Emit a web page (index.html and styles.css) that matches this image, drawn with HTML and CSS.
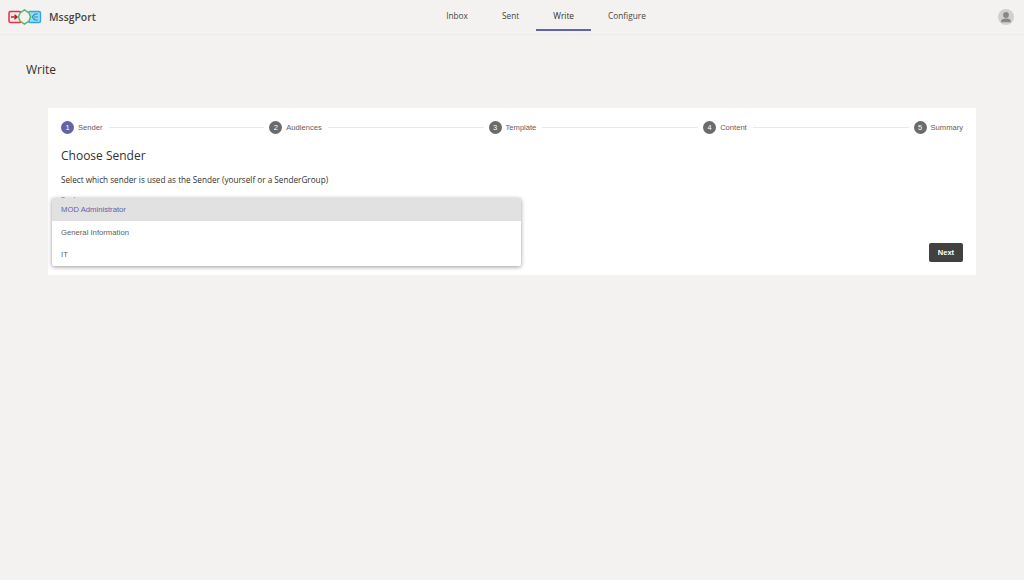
FILE: index.html
```html
<!DOCTYPE html>
<html lang="en">
<head>
  <meta charset="UTF-8">
  <meta name="viewport" content="width=device-width, initial-scale=1.0">
  <title>MssgPort</title>
  <link rel="stylesheet" href="styles.css">
</head>
<body>

  <header class="topBar">
    <div class="brand">
      <svg class="logo" width="34" height="16" viewBox="0 0 34 16">
        <rect x="1" y="2.5" width="12" height="11" rx="1.5" fill="#f9e4e6" stroke="#dc3545" stroke-width="1.5"/>
        <path d="M3 8h6M6.5 5.8L9 8 6.5 10.2" fill="none" stroke="#b3202f" stroke-width="1.5"/>
        <rect x="20.5" y="2.5" width="12" height="11" rx="1.5" fill="#9bdcf5" stroke="#2ea8e0" stroke-width="1.4"/>
        <path d="M24 8l3-3M24 8l3 3M27 5h3M27 11h3M26 8h4" fill="none" stroke="#1f8fc6" stroke-width="1.1"/>
        <path d="M16.5 .8L21 4 22.5 8 21 12 16.5 15.2 12 12 10.5 8 12 4Z" fill="#f3f2f1" stroke="#5cb85c" stroke-width="1.5" stroke-linejoin="round"/>
      </svg>
      <span class="brandName">MssgPort</span>
    </div>
    <nav class="mainNav">
      <a class="navItem">Inbox</a>
      <a class="navItem">Sent</a>
      <a class="navItem active">Write</a>
      <a class="navItem">Configure</a>
    </nav>
    <div class="avatar">
      <svg width="16" height="16" viewBox="0 0 16 16">
        <circle cx="8" cy="8" r="8" fill="#d2d0ce"/>
        <circle cx="8" cy="6" r="2.9" fill="#8a8886"/>
        <path d="M3 13.2c0-2.6 1.6-3.7 5-3.7s5 1.1 5 3.7z" fill="#8a8886"/>
      </svg>
    </div>
  </header>

  <h1 class="pageTitle">Write</h1>

  <main class="card">
    <div class="stepper">
      <div class="step current"><span class="stepNo">1</span><span class="stepName">Sender</span></div>
      <div class="stepLine"></div>
      <div class="step"><span class="stepNo">2</span><span class="stepName">Audiences</span></div>
      <div class="stepLine"></div>
      <div class="step"><span class="stepNo">3</span><span class="stepName">Template</span></div>
      <div class="stepLine"></div>
      <div class="step"><span class="stepNo">4</span><span class="stepName">Content</span></div>
      <div class="stepLine"></div>
      <div class="step"><span class="stepNo">5</span><span class="stepName">Summary</span></div>
    </div>

    <h2 class="cardTitle">Choose Sender</h2>
    <p class="cardText">Select which sender is used as the Sender (yourself or a SenderGroup)</p>

    <div class="field">
      <label class="fieldLabel">Sender</label>
      <ul class="menu">
        <li class="menuItem selected">MOD Administrator</li>
        <li class="menuItem">General Information</li>
        <li class="menuItem">IT</li>
      </ul>
    </div>

    <div class="actions">
      <button class="nextBtn">Next</button>
    </div>
  </main>

</body>
</html>
```

FILE: styles.css
```css
* {
  box-sizing: border-box;
}
html, body {
  margin: 0;
  padding: 0;
}
body {
  min-height: 580px;
  background: #f3f2f1;
  font-family: "Open Sans", "Liberation Sans", sans-serif;
  color: #323130;
}
.topBar {
  height: 35px;
  border-bottom: 1px solid #edebe9;
  display: flex;
  align-items: stretch;
  justify-content: space-between;
  padding: 0 10px 0 8px;
}
.brand {
  width: 300px;
  display: flex;
  align-items: center;
  padding-bottom: 1px;
}
.logo {
  display: block;
}
.brandName {
  margin-left: 7px;
  font-size: 10.4px;
  font-weight: 600;
  color: #484644;
}
.mainNav {
  display: flex;
  height: 31px;
  margin-right: 214px;
}
.navItem {
  display: block;
  padding: 0 17px;
  font-size: 8.3px;
  line-height: 32px;
  color: #484644;
}
.navItem.active {
  border-bottom: 2px solid #6264a7;
  color: #323130;
}
.avatar {
  display: flex;
  align-items: center;
  padding-bottom: 1px;
}
.avatar svg {
  display: block;
}
.pageTitle {
  margin: 26px 0 0 26px;
  font-size: 12px;
  line-height: 18px;
  font-weight: 400;
  color: #323130;
}
.card {
  margin: 29px 48px 0;
  height: 167px;
  background: #fff;
  padding: 13px;
}
.stepper {
  display: flex;
  align-items: center;
  height: 13px;
}
.step {
  display: flex;
  align-items: center;
}
.stepNo {
  width: 13px;
  height: 13px;
  border-radius: 50%;
  background: #6b6b6b;
  color: #fff;
  font-family: "Liberation Sans", sans-serif;
  font-size: 7.5px;
  line-height: 13px;
  text-align: center;
}
.step.current .stepNo {
  background: #6264a7;
}
.stepName {
  margin-left: 4px;
  font-family: "Liberation Sans", sans-serif;
  font-size: 7.6px;
  color: #5f5e5d;
}
.stepLine {
  flex: 1;
  height: 1px;
  margin: 0 5px 0 6px;
  background: #e9e9e9;
}
.cardTitle {
  margin: 13px 0 0;
  font-size: 12px;
  line-height: 18px;
  font-weight: 400;
  color: #323130;
}
.cardText {
  margin: 9px 0 0;
  font-size: 8.2px;
  line-height: 12px;
  color: #323130;
}
.field {
  position: relative;
  margin-top: 9px;
  height: 12px;
}
.fieldLabel {
  display: block;
  font-family: "Liberation Sans", sans-serif;
  font-size: 6px;
  line-height: 8px;
  color: #6264a7;
}
.menu {
  position: absolute;
  top: 3px;
  left: -9px;
  width: 469px;
  margin: 0;
  padding: 0;
  list-style: none;
  background: #fff;
  border-radius: 2px;
  box-shadow: 0 1px 4px rgba(0, 0, 0, 0.4);
}
.menuItem {
  height: 22.5px;
  padding: 1px 0 0 9px;
  font-family: "Liberation Sans", sans-serif;
  font-size: 7.7px;
  line-height: 22px;
  color: #616060;
}
.menuItem.selected {
  background: #e1e1e1;
  color: #6264a7;
}
.actions {
  display: flex;
  justify-content: flex-end;
  margin-top: 36px;
}
.nextBtn {
  width: 34px;
  height: 19px;
  padding: 0;
  border: 0;
  border-radius: 2px;
  background: #424140;
  color: #fff;
  font-family: "Liberation Sans", sans-serif;
  font-size: 7.5px;
  font-weight: 700;
}
```
